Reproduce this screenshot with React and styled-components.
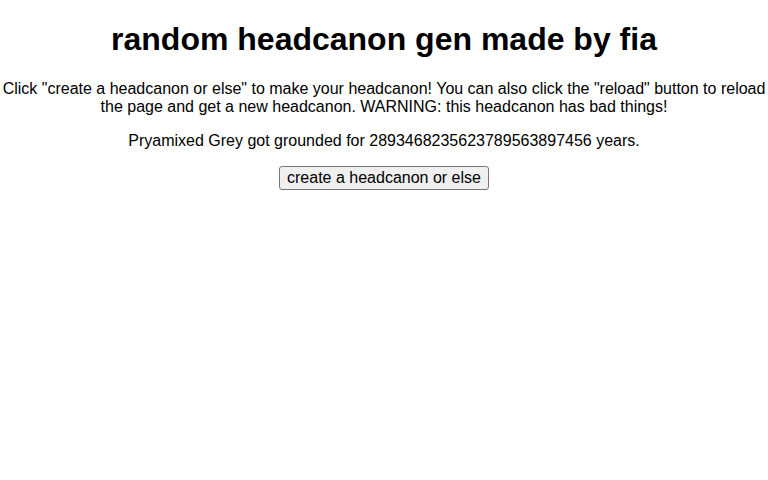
import React from 'react'
import styled, { createGlobalStyle } from 'styled-components'

const GlobalStyle = createGlobalStyle`
    body {
        margin: 0;
        background: #ffffff;
        font-family: "Liberation Sans", Arial, sans-serif;
        color: #000000;
    }
`

function App() {
    return (
        <>
            <GlobalStyle />
            <Page>
                <Title>random headcanon gen made by fia</Title>
                <Text>
                    Click "create a headcanon or else" to make your headcanon! You can also click the "reload" button to reload the page and get a new headcanon. WARNING: this headcanon has bad things!
                </Text>
                <Result>Pryamixed Grey got grounded for 2893468235623789563897456 years.</Result>
                <ButtonRow>
                    <Button>create a headcanon or else</Button>
                </ButtonRow>
            </Page>
        </>
    )
}

export default App

const Page = styled.div`
    text-align: center;
    padding: 0 2px;
`

const Title = styled.h1`
    font-size: 32px;
    font-weight: bold;
    margin: 21px 0 22px;
`

const Text = styled.p`
    font-size: 16px;
    line-height: 18px;
    margin: 16px 0;
`

const Result = styled(Text)``

const ButtonRow = styled.div`
    margin: 16px 0;
`

const Button = styled.button`
    font-family: "Liberation Sans", Arial, sans-serif;
    font-size: 16px;
    line-height: 18px;
    color: #000000;
    background: #efefef;
    border: 1px solid #767676;
    border-radius: 3px;
    padding: 2px 7px;
    cursor: pointer;
`
